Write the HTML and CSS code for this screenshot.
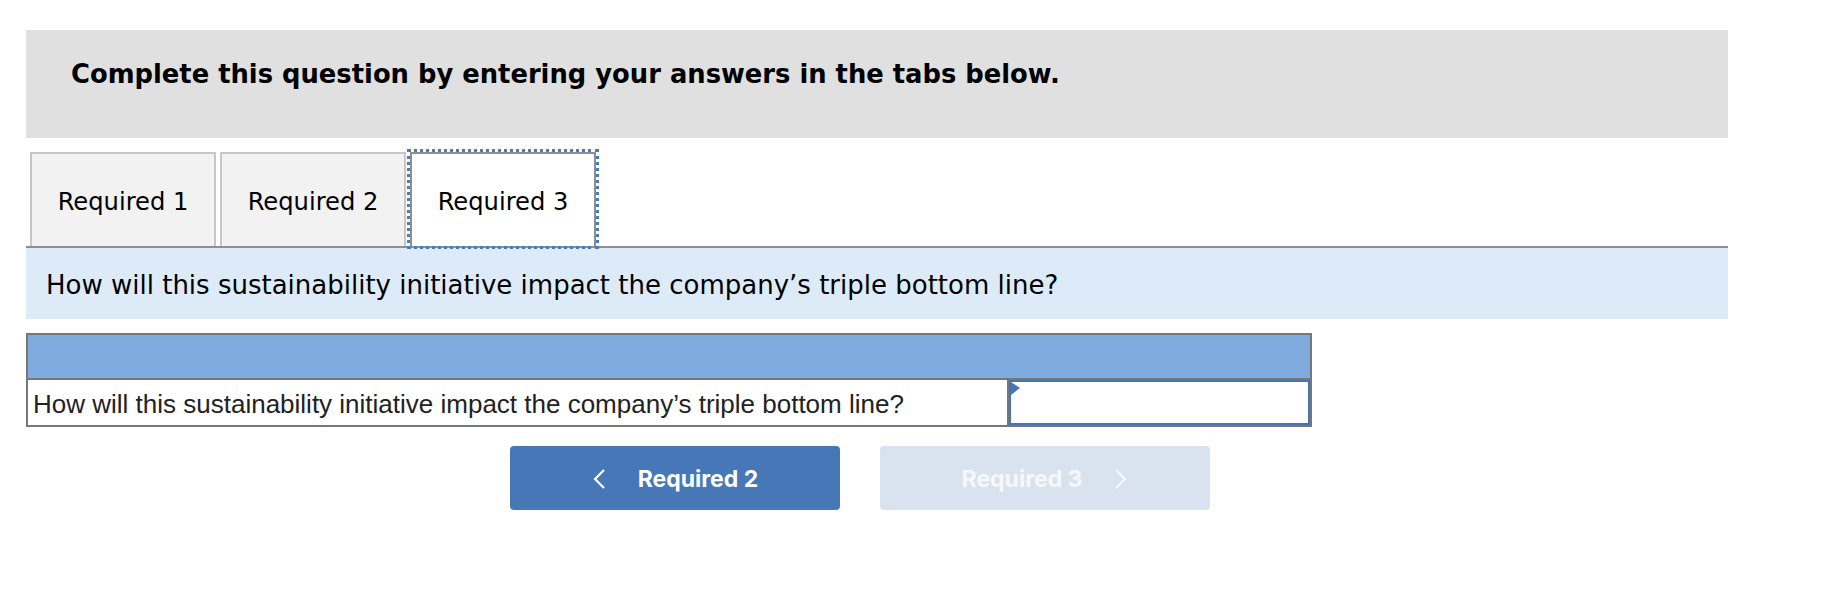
FILE: index.html
```html
<!DOCTYPE html>
<html>
<head>
    <title>Required 3</title>
    <link rel="stylesheet" href="styles.css">
</head>
<body>
    <div class="page">
        <div class="instructions">Complete this question by entering your answers in the tabs below.</div>

        <div class="tabs">
            <div class="tab">Required 1</div>
            <div class="tab">Required 2</div>
            <div class="tab active">Required 3</div>
        </div>

        <div class="question">How will this sustainability initiative impact the company’s triple bottom line?</div>

        <div class="answer-table">
            <div class="answer-head"></div>
            <div class="answer-row">
                <div class="answer-label">How will this sustainability initiative impact the company’s triple bottom line?</div>
                <div class="answer-input"><span class="marker"></span></div>
            </div>
        </div>

        <div class="nav">
            <button class="nav-btn">
                <svg width="14" height="22" viewBox="0 0 14 22"><path d="M12 2 L3 11 L12 20" fill="none" stroke="currentColor" stroke-width="2.2"/></svg>
                <span>Required 2</span>
            </button>
            <button class="nav-btn disabled">
                <span>Required 3</span>
                <svg width="14" height="22" viewBox="0 0 14 22"><path d="M2 2 L11 11 L2 20" fill="none" stroke="currentColor" stroke-width="2.2"/></svg>
            </button>
        </div>
    </div>
</body>
</html>
```

FILE: styles.css
```css
body {
    margin: 0;
    background: #fff;
    font-family: "DejaVu Sans", Verdana, sans-serif;
    color: #000;
}
.page {
    width: 1702px;
    padding: 30px 0 0 26px;
}
.instructions {
    background: #e0e0e0;
    font-weight: bold;
    font-size: 25.8px;
    line-height: 32px;
    padding: 28px 0 48px 45px;
}
.tabs {
    display: flex;
    gap: 4px;
    margin-top: 14px;
    padding-left: 4px;
    border-bottom: 2px solid #8e8e8e;
}
.tab {
    width: 182px;
    height: 89px;
    padding-top: 3px;
    display: flex;
    align-items: center;
    justify-content: center;
    background: #f2f2f2;
    border: 2px solid #c6c6c6;
    border-bottom: none;
    font-size: 24.2px;
}
.tab.active {
    background: #fff;
    border-color: #8e8e8e;
    outline: 3px dotted #4b7bbf;
}
.question {
    background: #ddebf8;
    font-size: 26px;
    line-height: 30px;
    padding: 22px 0 19px 20px;
}
.answer-table {
    width: 1282px;
    margin-top: 14px;
    border: 2px solid #777;
}
.answer-head {
    height: 43px;
    background: #80abdf;
    border-bottom: 2px solid #777;
}
.answer-row {
    display: flex;
    height: 45px;
}
.answer-label {
    width: 974px;
    padding: 3px 0 0 5px;
    border-right: 2px solid #777;
    display: flex;
    align-items: center;
    font-family: "Liberation Sans", Arial, sans-serif;
    font-size: 26px;
    color: #222;
}
.answer-input {
    flex: 1;
    position: relative;
    border: 2px solid #4674b4;
}
.marker {
    position: absolute;
    top: 0;
    left: 0;
    width: 0;
    height: 0;
    border-top: 6px solid transparent;
    border-bottom: 7px solid transparent;
    border-left: 9px solid #4674b4;
}
.nav {
    display: flex;
    gap: 40px;
    margin-top: 19px;
    padding-left: 484px;
}
.nav-btn {
    width: 330px;
    height: 64px;
    padding-top: 2px;
    display: flex;
    align-items: center;
    justify-content: center;
    gap: 32px;
    border: none;
    border-radius: 4px;
    background: #4677b7;
    color: #fff;
    font-family: Inter, Roboto, sans-serif;
    font-weight: bold;
    font-size: 23px;
    cursor: pointer;
}
.nav-btn.disabled {
    background: #d9e3ef;
    color: #f6f8fc;
    cursor: default;
}
```
